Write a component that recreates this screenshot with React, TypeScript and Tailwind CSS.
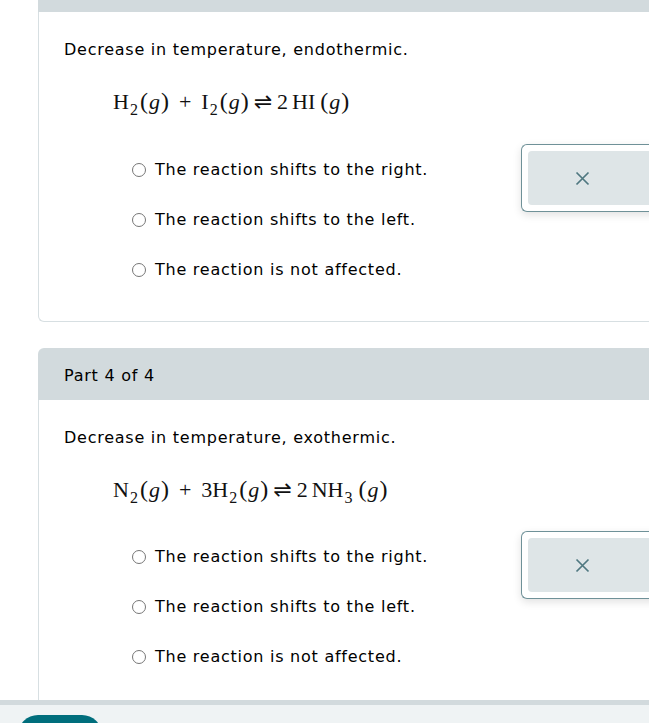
import React from "react";

const sans = { fontFamily: "Verdana, 'DejaVu Sans', sans-serif", letterSpacing: "0.75px" };
const serif = { fontFamily: "'Liberation Serif', 'Times New Roman', serif", letterSpacing: "0px" };

function Sub({ children }: { children: React.ReactNode }) {
  return <span className="relative top-[6px] ml-[1px] text-[16px] leading-none">{children}</span>;
}

function G() {
  return (
    <span className="ml-[2px]">
      <span className="text-[24px]">(</span>
      <i className="mx-[1px]">g</i>
      <span className="text-[24px]">)</span>
    </span>
  );
}

function Arrow() {
  return (
    <span className="mx-[5px] text-[22px]" style={{ fontFamily: "'DejaVu Sans', sans-serif" }}>
      ⇌
    </span>
  );
}

function Equation1() {
  return (
    <div className="ml-[49px] mt-[23px] flex h-8 items-baseline text-[22px] leading-8 text-[#111]" style={serif}>
      <span>H</span>
      <Sub>2</Sub>
      <G />
      <span className="mx-[10px]">+</span>
      <span>I</span>
      <Sub>2</Sub>
      <G />
      <Arrow />
      <span>2</span>
      <span className="ml-[4px]">HI</span>
      <span className="ml-[3px]">
        <G />
      </span>
    </div>
  );
}

function Equation2() {
  return (
    <div className="ml-[49px] mt-[23px] flex h-8 items-baseline text-[22px] leading-8 text-[#111]" style={serif}>
      <span>N</span>
      <Sub>2</Sub>
      <G />
      <span className="mx-[10px]">+</span>
      <span>3H</span>
      <Sub>2</Sub>
      <G />
      <Arrow />
      <span>2</span>
      <span className="ml-[4px]">NH</span>
      <Sub>3</Sub>
      <span className="ml-[4px]">
        <G />
      </span>
    </div>
  );
}

const options = [
  "The reaction shifts to the right.",
  "The reaction shifts to the left.",
  "The reaction is not affected.",
];

function Choices({ top }: { top: number }) {
  return (
    <div className="flex items-start" style={{ marginTop: top }}>
      <div className="ml-[68px] flex flex-col gap-[26px] pt-[14px]">
        {options.map((o) => (
          <label key={o} className="flex h-6 items-center text-[16px] text-black">
            <span className="mr-[9px] h-[14px] w-[14px] rounded-full border border-[#767676] bg-white" />
            {o}
          </label>
        ))}
      </div>
      <div className="ml-auto w-[137px] shrink-0 rounded-l-[6px] border border-r-0 border-[#6f9198] bg-white p-[6px] shadow-[0_3px_8px_rgba(0,0,0,0.12)]">
        <div className="flex h-[54px] items-center rounded-l-[4px] bg-[#dee5e7] pl-[47px]">
          <svg width="15" height="15" viewBox="0 0 15 15" fill="none">
            <path d="M1.5 1.5 L13.5 13.5 M13.5 1.5 L1.5 13.5" stroke="#4f7880" strokeWidth="1.7" />
          </svg>
        </div>
      </div>
    </div>
  );
}

export default function App() {
  return (
    <div className="relative h-[723px] w-[649px] overflow-hidden bg-white" style={sans}>
      <div className="ml-[38px] w-[620px]">
        {/* Part 3 (cut off at top) */}
        <div className="h-3 bg-[#d2dadd]" />
        <div className="rounded-bl-[6px] border-b border-l border-[#d7dfe2] pb-[39px] pl-[25px] pt-[26px]">
          <p className="h-6 text-[16px] leading-6 text-black">Decrease in temperature, endothermic.</p>
          <Equation1 />
          <Choices top={27} />
        </div>

        {/* Part 4 */}
        <div className="mt-[26px] flex h-[52px] items-center rounded-tl-[6px] bg-[#d2dadd] pl-[26px] pt-[3px] text-[16px] text-black">
          Part 4 of 4
        </div>
        <div className="h-[300px] border-l border-[#d7dfe2] pl-[25px] pt-[26px]">
          <p className="h-6 text-[16px] leading-6 text-black">Decrease in temperature, exothermic.</p>
          <Equation2 />
          <Choices top={26} />
        </div>
      </div>

      <div className="h-[5px] bg-[#d2dadd]" />
      <div className="h-[18px] bg-[#eff3f4] pl-[18px] pt-[10px]">
        <div className="h-10 w-[84px] rounded-full bg-[#006e7c]" />
      </div>
    </div>
  );
}
